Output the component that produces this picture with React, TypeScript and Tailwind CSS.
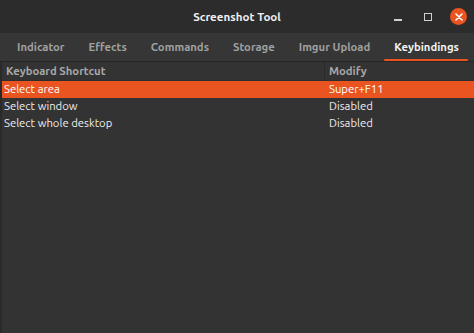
import React from "react";

const tabs = ["Indicator", "Effects", "Commands", "Storage", "Imgur Upload", "Keybindings"];

const rows = [
  { name: "Select area", key: "Super+F11" },
  { name: "Select window", key: "Disabled" },
  { name: "Select whole desktop", key: "Disabled" },
];

const App: React.FC = () => {
  return (
    <div
      className="w-[474px] h-[333px] bg-[#333333] flex flex-col overflow-hidden text-[11.3px]"
      style={{ fontFamily: '"Ubuntu", "Liberation Sans", "DejaVu Sans", sans-serif' }}
    >
      {/* Title bar */}
      <div className="relative h-[33px] bg-[#2c2c2c] flex items-center justify-center shrink-0">
        <span className="font-bold text-[11.6px] text-[#f0f0f0] pt-[1px]">Screenshot Tool</span>
        <div className="absolute right-[7px] top-0 h-full flex items-center gap-[14px]">
          <div className="w-[16px] h-[16px] flex items-center justify-center">
            <div className="w-[8px] h-[2px] bg-[#d0d0d0] mt-[6px]" />
          </div>
          <div className="w-[16px] h-[16px] flex items-center justify-center">
            <div className="w-[8px] h-[8px] border border-[#d0d0d0]" />
          </div>
          <div className="w-[17px] h-[17px] rounded-full bg-[#e95420] flex items-center justify-center">
            <svg width="8" height="8" viewBox="0 0 8 8">
              <path d="M1 1 L7 7 M7 1 L1 7" stroke="#ffffff" strokeWidth="1.6" strokeLinecap="round" />
            </svg>
          </div>
        </div>
      </div>

      {/* Tabs */}
      <div className="h-[29px] bg-[#363636] border-b border-[#262626] flex items-stretch pl-[5px] shrink-0">
        {tabs.map((t) => {
          const active = t === "Keybindings";
          return (
            <div
              key={t}
              className={`relative flex items-center px-[12px] whitespace-nowrap font-bold text-[11.3px] pt-[1px] ${
                active ? "text-[#f2f2f2]" : "text-[#a0a0a0]"
              }`}
            >
              {t}
              {active && (
                <div className="absolute left-[2px] right-[3px] bottom-0 h-[2px] bg-[#e95420] rounded-full" />
              )}
            </div>
          );
        })}
      </div>

      {/* Tree view */}
      <div className="flex-1 flex flex-col border-l-2 border-[#2a2a2a]">
        <div className="h-[19px] flex items-center font-bold text-[#a8a8a8] border-b border-[#2e2e2e]">
          <div className="w-[323px] pl-[4px] border-r border-[#2a2a2a] h-full flex items-center">Keyboard Shortcut</div>
          <div className="pl-[4px]">Modify</div>
        </div>
        {rows.map((r, i) => (
          <div
            key={r.name}
            className={`h-[17px] flex items-center ${
              i === 0 ? "bg-[#e95420] text-white" : "text-[#eeeeee]"
            }`}
          >
            <div className="w-[323px] pl-[2px]">{r.name}</div>
            <div className="pl-[4px]">{r.key}</div>
          </div>
        ))}
      </div>
    </div>
  );
};

export default App;
